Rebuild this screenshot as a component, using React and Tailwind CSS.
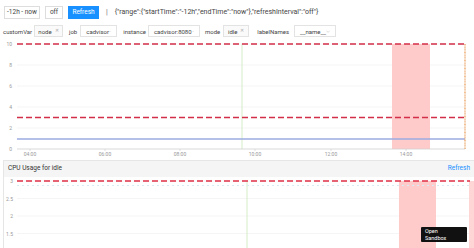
import React from "react";

const X_TICKS = [
  [30, "04:00"],
  [105, "06:00"],
  [180, "08:00"],
  [255, "10:00"],
  [331, "12:00"],
  [406, "14:00"],
];

function Tag({ children, w }) {
  return (
    <span className={`flex h-[12px] items-center justify-center gap-[3px] border border-[#e3e3e3] bg-[#fafafa] text-[6px] text-[#444] ${w}`}>
      {children}
      <span className="text-[4.5px] text-[#aaa]">✕</span>
    </span>
  );
}

function Select({ children, w }) {
  return (
    <span className={`flex h-[12px] items-center justify-between border border-[#e3e3e3] bg-white px-[5px] text-[6px] text-[#444] ${w}`}>
      {children}
      <svg width="5" height="3" viewBox="0 0 5 3"><path d="M0.5 0.5 L2.5 2.5 L4.5 0.5" fill="none" stroke="#bbb" strokeWidth="0.6" /></svg>
    </span>
  );
}

function MainChart() {
  const grid = [[44, "10"], [65, "8"], [86, "6"], [107, "4"], [128, "2"], [149, "0"]];
  return (
    <svg width="474" height="120" viewBox="0 40 474 120" className="block">
      {grid.map(([y, l]) => (
        <g key={l}>
          <line x1="17" x2="465" y1={y} y2={y} stroke="#efefef" strokeWidth="0.6" />
          <text x="12" y={y + 2} fontSize="5" fill="#999" textAnchor="end">{l}</text>
        </g>
      ))}
      <rect x="392" y="44" width="38" height="105" fill="#ffcaca" />
      <line x1="242" x2="242" y1="44" y2="149" stroke="#c9e8b8" strokeWidth="0.8" />
      <line x1="17" x2="465" y1="139" y2="139" stroke="#9cabe2" strokeWidth="1.6" />
      <line x1="17" x2="465" y1="44" y2="44" stroke="#d42f48" strokeWidth="1.4" strokeDasharray="6 3" />
      <line x1="17" x2="465" y1="117.5" y2="117.5" stroke="#d42f48" strokeWidth="1.4" strokeDasharray="6 3" />
      <line x1="465" x2="465" y1="44" y2="149" stroke="#e89a55" strokeWidth="1.2" strokeDasharray="1 0.6" />
      <line x1="17" x2="465" y1="149" y2="149" stroke="#ccc" strokeWidth="0.6" />
      {X_TICKS.map(([x, l]) => (
        <g key={l}>
          <line x1={x} x2={x} y1="149" y2="151" stroke="#ccc" strokeWidth="0.6" />
          <text x={x} y="156" fontSize="5" fill="#999" textAnchor="middle">{l}</text>
        </g>
      ))}
    </svg>
  );
}

function IdleChart() {
  const grid = [[180, "3"], [197.5, "2.5"], [215, "2"], [232.5, "1.5"]];
  return (
    <svg width="470" height="72" viewBox="4 176 470 72" className="block">
      {grid.map(([y, l]) => (
        <g key={l}>
          <line x1="17" x2="470" y1={y} y2={y} stroke="#efefef" strokeWidth="0.6" />
          <text x="13" y={y + 2} fontSize="5" fill="#999" textAnchor="end">{l}</text>
        </g>
      ))}
      <rect x="399" y="180" width="37" height="70" fill="#ffcaca" />
      <rect x="469" y="180" width="5" height="70" fill="#ffd6d6" />
      <line x1="247" x2="247" y1="180" y2="248" stroke="#c9e8b8" strokeWidth="0.8" />
      <line x1="17" x2="470" y1="184.5" y2="184.5" stroke="#d8ecf6" strokeWidth="1" strokeDasharray="2 3" />
      <line x1="17" x2="470" y1="180" y2="180" stroke="#e02f45" strokeWidth="1.4" strokeDasharray="6 3" />
    </svg>
  );
}

export default function App() {
  return (
    <div className="relative h-[248px] w-[474px] overflow-hidden bg-white font-[Roboto,sans-serif] text-[#333]">
      <div className="mt-[6px] flex h-[13px] items-center gap-[5px] px-[4px]">
        <span className="flex h-[13px] w-[36px] items-center justify-center border border-[#ddd] text-[6.5px] text-[#444]">-12h - now</span>
        <span className="flex h-[13px] w-[18px] items-center justify-center border border-[#ddd] text-[6.5px] text-[#444]">off</span>
        <span className="flex h-[13px] w-[31px] items-center justify-center bg-[#1890ff] text-[6.5px] text-white">Refresh</span>
        <span className="ml-[2px] text-[7px] text-[#666]">|</span>
        <span className="ml-[2px] text-[7px] text-[#444]">{'{"range":{"startTime":"-12h","endTime":"now"},"refreshInterval":"off"}'}</span>
      </div>
      <div className="mb-[3px] mt-[6px] flex h-[12px] items-center px-[3px] text-[6px] text-[#444]">
        <span className="mr-[4px] w-[27px]">customVar</span>
        <Tag w="w-[29px]">node</Tag>
        <span className="ml-[6px] mr-[3px]">job</span>
        <Select w="w-[37px]">cadvisor</Select>
        <span className="ml-[6px] mr-[2px]">instance</span>
        <Select w="w-[52px]">cadvisor:8080</Select>
        <span className="ml-[5px] mr-[3px]">mode</span>
        <Tag w="w-[26px]">idle</Tag>
        <span className="ml-[8px] mr-[5px]">labelNames</span>
        <Select w="w-[42px]">__name__</Select>
      </div>
      <MainChart />
      <div className="ml-[3px] border-l border-t border-[#e6e6e6]">
        <div className="flex h-[16px] items-center justify-between bg-[#f5f5f5] px-[4px] text-[6.5px]">
          <span className="text-[#333]">CPU Usage for idle</span>
          <span className="text-[#1890ff]">Refresh</span>
        </div>
        <IdleChart />
      </div>
      <div className="absolute left-[421px] top-[227px] flex w-[46px] flex-col rounded-[1px] bg-[#111] px-[4px] py-[1px] text-[5.5px] leading-[6.5px] text-white">
        <span>Open</span>
        <span>Sandbox</span>
      </div>
    </div>
  );
}
